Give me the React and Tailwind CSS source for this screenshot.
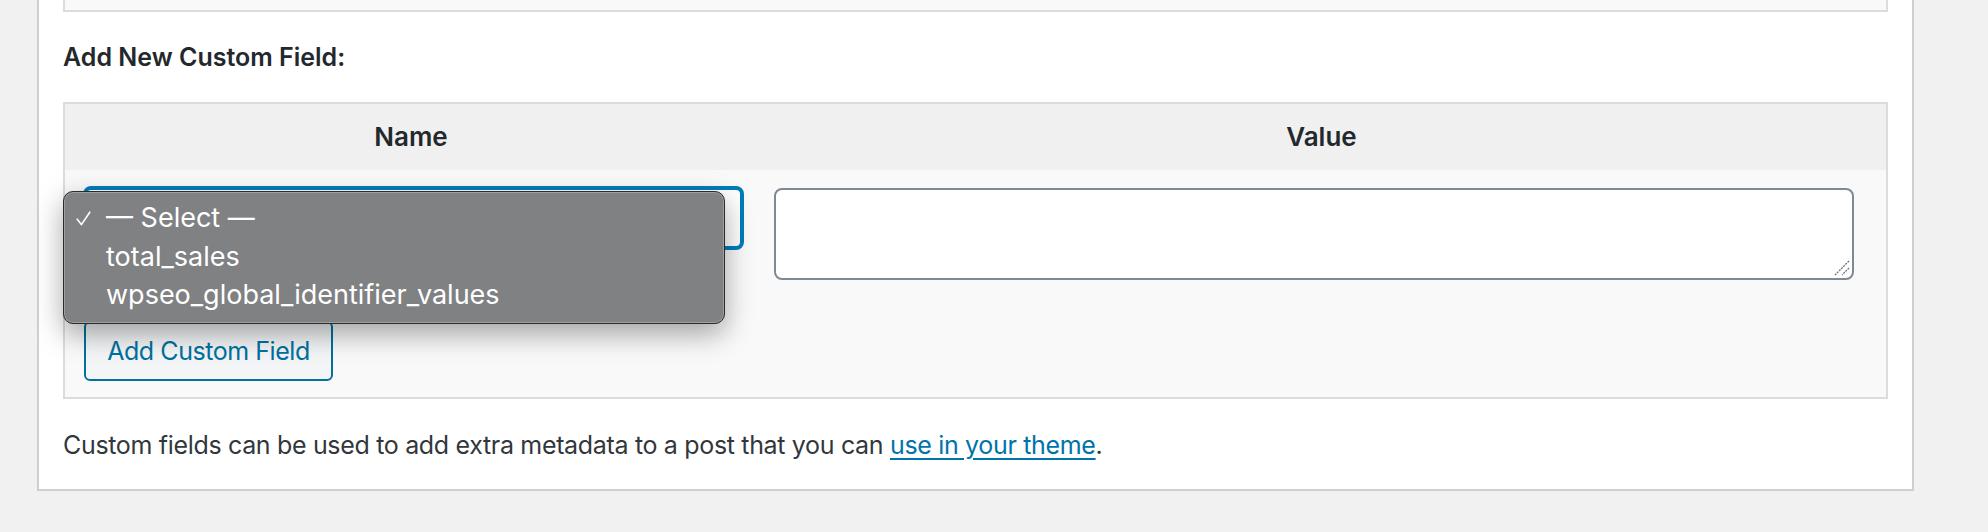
import React from "react";

function Check() {
  return (
    <svg width="15" height="15" viewBox="0 0 15 15" className="block">
      <path d="M1.2 8.2 L5.4 13.6 L13.8 1.2" fill="none" stroke="white" strokeWidth="1.6" strokeLinecap="round" strokeLinejoin="round" />
    </svg>
  );
}

export default function App() {
  return (
    <div className="w-[1988px] h-[532px] overflow-hidden bg-[#f1f1f1] font-['Inter',sans-serif] text-[#32373c]">
      <div className="relative ml-[37px] w-[1877px] h-[491px] bg-white border-x-2 border-b-2 border-[#ccd0d4] pl-[24px] pr-[24px]">
        {/* existing fields box (cut off at top) */}
        <div className="h-[12px] border-x-2 border-b-2 border-[#dcdcde] bg-[#f9f9f9]" />

        <h3 className="mt-[27px] text-[25px] leading-[36px] font-semibold text-[#23282d]">Add New Custom Field:</h3>

        {/* table */}
        <div className="mt-[27px] border-2 border-[#dcdcde]">
          <div className="grid grid-cols-[692px_1fr] h-[66px] bg-[#f0f0f0] text-[26px] font-semibold leading-[66px] text-[#23282d]">
            <div className="text-center">Name</div>
            <div className="text-center">Value</div>
          </div>
          <div className="grid grid-cols-[692px_1fr] h-[227px] bg-[#f9f9f9]">
            <div className="flex flex-col items-start pl-[18px] pt-[16px]">
              <div className="w-[661px] h-[64px] rounded-[8px] border-4 border-[#007cba] bg-white" />
              <button className="ml-[1px] mt-[71px] w-[249px] h-[60px] rounded-[6px] border-2 border-[#0071a1] bg-[#f3f5f6] text-center text-[25px] tracking-[-0.45px] leading-[56px] text-[#0071a1]">
                Add Custom Field
              </button>
            </div>
            <div className="pl-[17px] pt-[18px]">
              <div className="relative w-[1080px] h-[92px] rounded-[8px] border-2 border-[#7e8993] bg-white">
                <svg className="absolute right-[2px] bottom-[2px]" width="16" height="16" viewBox="0 0 16 16">
                  <path d="M15 1 L1 15" stroke="#6b6b6b" strokeWidth="1.3" strokeDasharray="2 1" />
                  <path d="M15 8 L8 15" stroke="#6b6b6b" strokeWidth="1.3" strokeDasharray="2 1" />
                </svg>
              </div>
            </div>
          </div>
        </div>

        <p className="mt-[28px] text-[25px] tracking-[-0.33px] leading-[36px] text-[#32373c]">
          Custom fields can be used to add extra metadata to a post that you can{" "}
          <a className="text-[#0073aa] underline underline-offset-[4px]" href="#">use in your theme</a>.
        </p>

        {/* native popup menu */}
        <div className="absolute left-[24px] top-[191px] w-[662px] h-[133px] rounded-[10px] border border-[#2b2b2b] bg-[#7f8183] shadow-[0_10px_28px_rgba(0,0,0,0.35),inset_0_0_0_1px_rgba(255,255,255,0.25)] pt-[7px] text-[27px] leading-[38.5px] text-white">
          <div className="flex items-center">
            <div className="w-[42px] pl-[12px]"><Check /></div>
            <span>— Select —</span>
          </div>
          <div className="pl-[42px]">total_sales</div>
          <div className="pl-[42px]">wpseo_global_identifier_values</div>
        </div>
      </div>
    </div>
  );
}
